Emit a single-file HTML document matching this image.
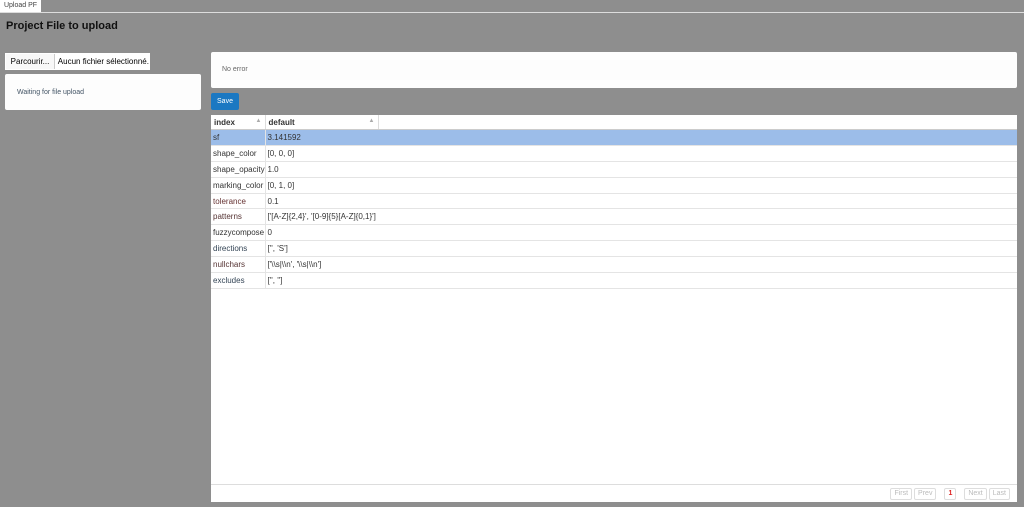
<!DOCTYPE html>
<html><head><style>
body{margin:0;width:1024px;height:507px;background:#8e8e8e;font-family:"Liberation Sans",sans-serif;position:relative;overflow:hidden}
.a{position:absolute}
.tab{left:0;top:0;width:41px;height:12px;background:#fff;font-size:7px;color:#444;line-height:12px;text-align:center}
.line{left:0;top:12px;width:1024px;height:1px;background:#ddd}
h1{position:absolute;left:6px;top:20px;margin:0;font-size:11px;color:#111}
.file{left:5px;top:53px;width:145px;height:17px;background:#fff;font-size:8px;line-height:17px}
.file span{display:inline-block;width:48px;height:15px;margin:1px;border-right:1px solid #ccc;text-align:center;background:#f8f8f8;line-height:15px}
.p{background:#fdfdfd;border-radius:2px;font-size:7px;color:#666}
table{border-collapse:collapse;font-size:8px;color:#333;table-layout:fixed}
td{height:14.9px;padding:0 2px;border-bottom:1px solid #e4e4e4;white-space:nowrap;overflow:visible}
td:first-child{border-right:1px solid #e4e4e4}
th{height:14px;text-align:left;padding:0 3px;font-size:8px;border-right:1px solid #ddd;border-bottom:1px solid #ccc}
.sel td{background:#9cbde9}
.pg{display:inline-block;font-size:7px;line-height:10px;color:#bbb;border:1px solid #ddd;padding:0 3px;margin-left:2px;border-radius:2px;vertical-align:top}
</style></head><body>
<div class="a tab">Upload PF</div><div class="a line"></div>
<h1>Project File to upload</h1>
<div class="a file"><span>Parcourir...</span> Aucun fichier sélectionné.</div>
<div class="a p" style="left:5px;top:74px;width:196px;height:36px;line-height:38px;text-indent:12px;color:#456">Waiting for file upload</div>
<div class="a p" style="left:211px;top:52px;width:806px;height:36px;line-height:36px;text-indent:11px">No error</div>
<div class="a" style="left:211px;top:93px;width:28px;height:17px;background:#1b78c2;color:#fff;font-size:7px;line-height:17px;text-align:center;border-radius:2px">Save</div>
<div class="a" style="left:211px;top:115px;width:806px;height:387px;background:#fff">
<table style="width:806px">
<colgroup><col style="width:54px"><col style="width:113px"><col></colgroup>
<tr><th>index <span style="float:right;color:#aaa;font-size:6px">▲</span></th><th>default <span style="float:right;color:#aaa;font-size:6px">▲</span></th><th style="border-right:0"></th></tr>
<tr class="sel"><td>sf</td><td colspan="2">3.141592</td></tr>
<tr><td>shape_color</td><td colspan="2">[0, 0, 0]</td></tr>
<tr><td>shape_opacity</td><td colspan="2">1.0</td></tr>
<tr><td>marking_color</td><td colspan="2">[0, 1, 0]</td></tr>
<tr><td style="color:#633">tolerance</td><td colspan="2">0.1</td></tr>
<tr><td style="color:#533">patterns</td><td colspan="2">['[A-Z]{2,4}', '[0-9]{5}[A-Z]{0,1}']</td></tr>
<tr><td>fuzzycompose</td><td colspan="2">0</td></tr>
<tr><td style="color:#345">directions</td><td colspan="2">['', 'S']</td></tr>
<tr><td style="color:#533">nullchars</td><td colspan="2">['\\s|\\n', '\\s|\\n']</td></tr>
<tr><td style="color:#345">excludes</td><td colspan="2">['', '']</td></tr>
</table>
<div class="a" style="left:0;top:369px;width:806px;height:1px;background:#ddd"></div>
<div class="a" style="right:7px;top:373px;"><span class="pg">First</span><span class="pg">Prev</span><span class="pg" style="color:#d22;margin-left:8px;font-weight:bold">1</span><span class="pg" style="margin-left:8px">Next</span><span class="pg">Last</span></div>
</div>
</body></html>
